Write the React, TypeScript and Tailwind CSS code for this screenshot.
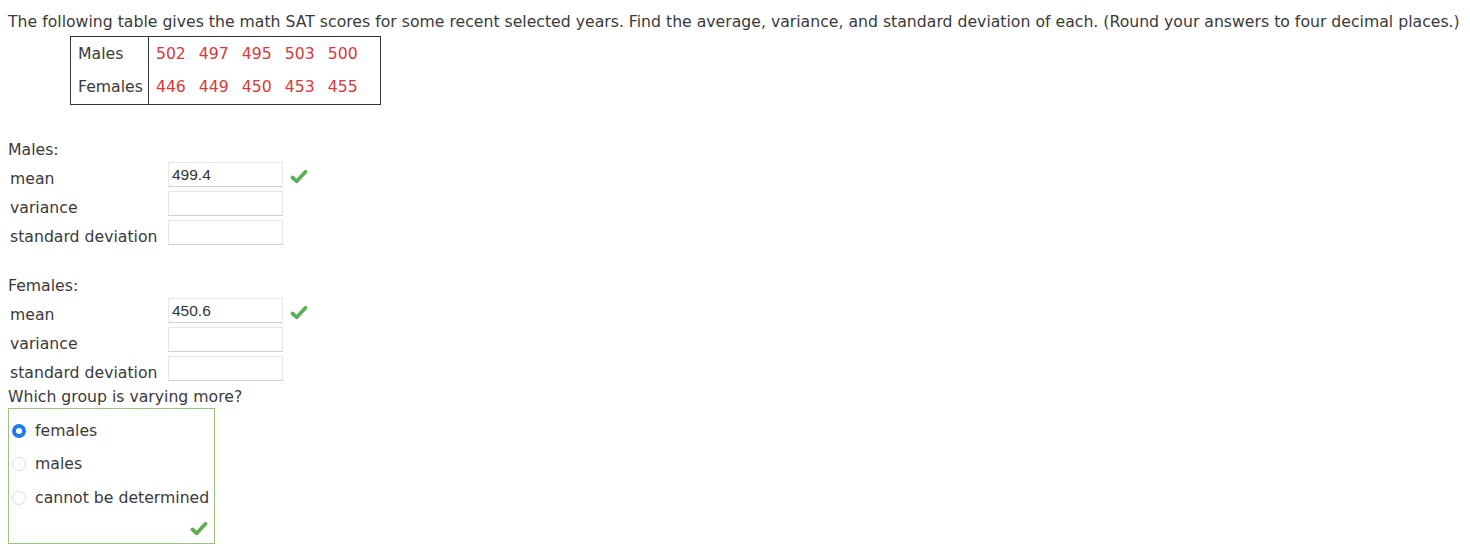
import React from "react";

const males = ["502", "497", "495", "503", "500"];
const females = ["446", "449", "450", "453", "455"];

function Check() {
  return (
    <svg width="18" height="15" viewBox="0 0 18 15">
      <path
        d="M2.5 8.5 L6.8 12.2 L15.5 2.8"
        fill="none"
        stroke="#5fae55"
        strokeWidth="3.8"
        strokeLinecap="round"
        strokeLinejoin="round"
      />
    </svg>
  );
}

function Field({ label, value }: { label: string; value?: string }) {
  return (
    <div className="flex h-[29px] items-center">
      <div className="w-[160px] pl-[2px] pt-[8px]">{label}</div>
      <div className="flex h-[25px] w-[115px] items-center border border-[#e6e6e6] border-b-[#cfcfcf] pl-[3px] font-['Liberation_Sans',sans-serif] text-[15.5px] text-[#333]">
        {value}
      </div>
      {value && (
        <div className="ml-[7px] mt-[4px]">
          <Check />
        </div>
      )}
    </div>
  );
}

function Radio({ label, checked }: { label: string; checked?: boolean }) {
  return (
    <div className="flex h-[33.5px] items-center gap-[9px] pl-[3px]">
      {checked ? (
        <div className="h-[14px] w-[14px] rounded-full border-[4px] border-[#1d7ce8] bg-white" />
      ) : (
        <div className="h-[14px] w-[14px] rounded-full border border-[#dcdcdc] bg-white" />
      )}
      <span>{label}</span>
    </div>
  );
}

export default function App() {
  return (
    <div className="bg-white px-[8px] font-['DejaVu_Sans',sans-serif] text-[15.7px] text-[#3a3a3a]">
      <p className="mt-[10px] flex h-[24px] items-center whitespace-nowrap">
        The following table gives the math SAT scores for some recent selected years. Find the average, variance, and standard deviation of each. (Round your answers to four decimal places.)
      </p>

      <table className="ml-[62px] mt-[2px] border border-[#333] border-collapse">
        <tbody>
          <tr className="h-[34px]">
            <td className="border-r border-[#333] pl-[7px] pr-[5px]">Males</td>
            {males.map((n, i) => (
              <td key={n} className={`pl-[7px] ${i === 4 ? "pr-[22px]" : "pr-[6px]"} text-[#d63a3a]`}>
                {n}
              </td>
            ))}
          </tr>
          <tr className="h-[34px]">
            <td className="border-r border-[#333] pl-[7px] pr-[5px]">Females</td>
            {females.map((n, i) => (
              <td key={n} className={`pl-[7px] ${i === 4 ? "pr-[22px]" : "pr-[6px]"} text-[#d63a3a]`}>
                {n}
              </td>
            ))}
          </tr>
        </tbody>
      </table>

      <div className="mt-[31px] flex h-[24px] items-center pt-[4px]">Males:</div>
      <Field label="mean" value="499.4" />
      <Field label="variance" />
      <Field label="standard deviation" />

      <div className="mt-[25px] flex h-[24px] items-center pt-[4px]">Females:</div>
      <Field label="mean" value="450.6" />
      <Field label="variance" />
      <Field label="standard deviation" />

      <div className="flex h-[24px] items-center pt-[4px]">Which group is varying more?</div>
      <div className="mt-[1px] flex h-[136px] w-[207px] flex-col border border-[#9cc584] pt-[5px]">
        <Radio label="females" checked />
        <Radio label="males" />
        <Radio label="cannot be determined" />
        <div className="flex flex-1 items-center justify-end pr-[6px]">
          <Check />
        </div>
      </div>
    </div>
  );
}
